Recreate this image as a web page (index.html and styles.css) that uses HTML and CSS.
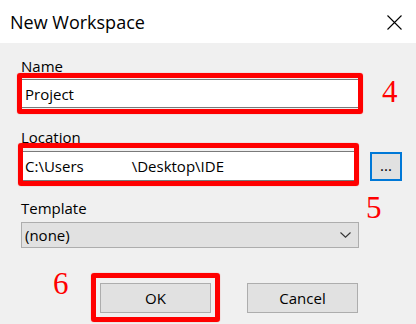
FILE: index.html
```html
<!DOCTYPE html>
<html>
<head>
<meta charset="utf-8">
<link rel="stylesheet" href="styles.css">
</head>
<body>
<div class="dialog">
  <header class="titlebar">
    <span class="title">New Workspace</span>
    <svg class="close" viewBox="0 0 15 15" width="15" height="15"><path d="M0.5 0.5 L14.5 14.5 M14.5 0.5 L0.5 14.5" stroke="#000" stroke-width="1.1" fill="none"/></svg>
  </header>
  <main class="content">
    <div class="label label-name">Name</div>
    <div class="field name-field mark mark-name">Project</div>

    <div class="label label-loc">Location</div>
    <div class="loc-row">
      <div class="field loc-field mark mark-loc">C:\Users<span class="redact"></span>\Desktop\IDE</div>
      <div class="browse">...</div>
    </div>

    <div class="label label-tpl">Template</div>
    <div class="select">
      <span>(none)</span>
      <svg class="chev" viewBox="0 0 11 6" width="11" height="6"><path d="M0.5 0.5 L5.5 5.2 L10.5 0.5" stroke="#333" stroke-width="1.1" fill="none"/></svg>
    </div>

    <div class="buttons">
      <div class="btn mark mark-ok">OK</div>
      <div class="btn">Cancel</div>
    </div>
  </main>
  <span class="num n4">4</span>
  <span class="num n5">5</span>
  <span class="num n6">6</span>
</div>
</body>
</html>
```

FILE: styles.css
```css
html, body {
  margin: 0;
  padding: 0;
}
body {
  background: #f0f0f0;
  font-family: "Open Sans", "Noto Sans", sans-serif;
  color: #000;
}
.dialog {
  position: relative;
  width: 416px;
  height: 324px;
  overflow: hidden;
  background: #f0f0f0;
}
.titlebar {
  height: 43px;
  background: #fff;
  display: flex;
  align-items: center;
  justify-content: space-between;
  padding: 0 14px 0 10px;
  box-sizing: border-box;
}
.title {
  font-size: 18px;
  line-height: 24px;
}
.close {
  display: block;
  margin-top: 1px;
}
.content {
  padding: 13px 0 0 21px;
}
.label {
  font-size: 15px;
  line-height: 20px;
  height: 20px;
}
.label-loc { margin-top: 19px; }
.label-tpl { margin-top: 17px; }

.field {
  box-sizing: border-box;
  background: #fff;
  border: 1px solid #7a7a7a;
  font-size: 15px;
  display: flex;
  align-items: center;
  padding-left: 3px;
  white-space: nowrap;
}
.name-field {
  width: 338px;
  height: 29px;
  margin-top: 3px;
}
.loc-row {
  display: flex;
  align-items: flex-start;
  gap: 15px;
  margin-top: 4px;
}
.loc-field {
  width: 334px;
  height: 30px;
}
.redact {
  display: inline-block;
  width: 48px;
}
.browse {
  box-sizing: border-box;
  width: 32px;
  height: 29px;
  margin-top: 1px;
  border: 2px solid #0078d7;
  background: #e1e1e1;
  font-size: 15px;
  line-height: 22px;
  text-align: center;
}
.select {
  box-sizing: border-box;
  width: 338px;
  height: 26px;
  margin-top: 4px;
  background: #e1e1e1;
  border: 1px solid #adadad;
  display: flex;
  align-items: center;
  justify-content: space-between;
  padding: 0 7px 0 3px;
  font-size: 15px;
}
.chev { display: block; }
.buttons {
  display: flex;
  gap: 36px;
  margin-top: 35px;
  padding-left: 79px;
}
.btn {
  box-sizing: border-box;
  width: 111px;
  height: 30px;
  background: #e1e1e1;
  border: 1px solid #adadad;
  font-size: 15px;
  display: flex;
  align-items: center;
  justify-content: center;
}

/* red annotation boxes */
.mark { position: relative; }
.mark::after {
  content: "";
  position: absolute;
  border: 5px solid #ff0000;
  border-radius: 3px;
  box-shadow: 0 0 1px rgba(255,0,0,0.6);
}
.mark-name::after { left: -5px; right: -5px; top: -7px; bottom: -7px; }
.mark-loc::after { left: -4px; right: -5px; top: -9px; bottom: -6px; }
.mark-ok::after { left: -10px; right: -10px; top: -11px; bottom: -10px; }

.num {
  position: absolute;
  font-family: "Liberation Serif", serif;
  font-size: 31px;
  line-height: 31px;
  color: #ff0000;
}
.n4 { left: 382px; top: 76px; }
.n5 { left: 366px; top: 192px; }
.n6 { left: 53px; top: 268px; }
```
